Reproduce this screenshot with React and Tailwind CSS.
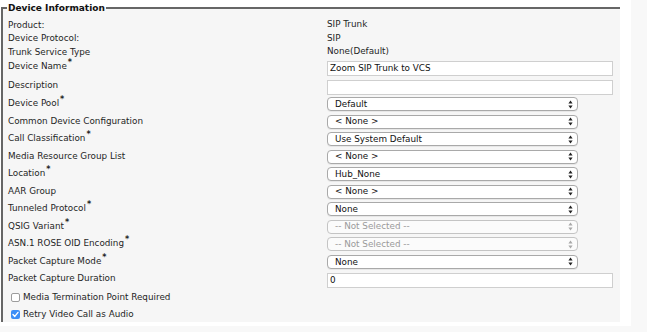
// Device Information panel (trunk configuration form)

function Arrows({ disabled }) {
  const c = disabled ? "#a8a8a8" : "#222";
  return (
    <svg width="5" height="9" viewBox="0 0 5 9">
      <path d="M2.5 0.6 L4.6 3.6 L0.4 3.6 Z" fill={c} />
      <path d="M0.4 5.4 L4.6 5.4 L2.5 8.4 Z" fill={c} />
    </svg>
  );
}

function Select({ value, disabled }) {
  return (
    <div
      className={
        disabled
          ? "mt-[1px] flex h-[14px] w-[251px] items-center justify-between rounded-[4px] border border-[#c4c4c4] bg-[#fbfbfb] pl-[7px] pr-[4px] text-[#9a9a9a]"
          : "mt-[1px] flex h-[14px] w-[251px] items-center justify-between rounded-[4px] border border-[#a9a9a9] bg-white pl-[7px] pr-[4px] text-[#111] shadow-[0_1px_0_rgba(0,0,0,0.06)]"
      }
    >
      <span className="leading-none">{value}</span>
      <Arrows disabled={disabled} />
    </div>
  );
}

function TextInput({ value = "" }) {
  return (
    <div className="flex h-[15px] w-[286px] items-center border border-[#cfcfcf] bg-white pl-[2px] text-[#111]">
      <span className="leading-none">{value}</span>
    </div>
  );
}

function Label({ text, req }) {
  return (
    <span className="leading-[11px]">
      {text}
      {req && <sup className="ml-[1px] text-[8px] font-bold">*</sup>}
    </span>
  );
}

const selects = [
  ["Device Pool", true, "Default"],
  ["Common Device Configuration", false, "< None >"],
  ["Call Classification", true, "Use System Default"],
  ["Media Resource Group List", false, "< None >"],
  ["Location", true, "Hub_None"],
  ["AAR Group", false, "< None >"],
  ["Tunneled Protocol", true, "None"],
  ["QSIG Variant", true, "-- Not Selected --", true],
  ["ASN.1 ROSE OID Encoding", true, "-- Not Selected --", true],
  ["Packet Capture Mode", true, "None"],
];

function CheckBox({ checked }) {
  if (checked)
    return (
      <span className="flex h-[9px] w-[9px] items-center justify-center rounded-[2px] bg-[#3b8df6]">
        <svg width="7" height="7" viewBox="0 0 7 7">
          <path d="M1 3.6 L2.8 5.4 L6 1.4" fill="none" stroke="white" strokeWidth="1.4" strokeLinecap="round" strokeLinejoin="round" />
        </svg>
      </span>
    );
  return <span className="h-[9px] w-[9px] rounded-[2px] border border-[#9c9c9c] bg-white" />;
}

export default function App() {
  return (
    <div className="h-[332px] w-[647px] bg-[#f8f8f8] font-['DejaVu_Sans',Verdana,sans-serif] text-[8.8px] text-[#1f1f1f]">
      <div className="h-[326px] w-[631px] bg-white pl-[1px]">
        <fieldset className="h-[322px] w-[619px] border-l-2 border-t-2 border-[#666] bg-[#f6f6f6]">
          <legend className="ml-[4px] px-[1px] text-[9px] font-bold leading-[16px] text-[#111]">
            Device Information
          </legend>

          <div className="grid grid-cols-[319px_1fr] pl-[5px] pt-[2px]">
            <div className="flex h-[14px] items-center"><Label text="Product:" /></div>
            <div className="flex h-[14px] items-center">SIP Trunk</div>
            <div className="flex h-[13px] items-center"><Label text="Device Protocol:" /></div>
            <div className="flex h-[13px] items-center">SIP</div>
            <div className="flex h-[14px] items-center"><Label text="Trunk Service Type" /></div>
            <div className="flex h-[14px] items-center">None(Default)</div>

            <div className="flex h-[19px] items-start pt-[2px]"><Label text="Device Name" req /></div>
            <div className="flex h-[19px] items-center"><TextInput value="Zoom SIP Trunk to VCS" /></div>
            <div className="flex h-[18px] items-start pt-[2px]"><Label text="Description" /></div>
            <div className="flex h-[18px] items-center"><TextInput /></div>

            {selects.map(([label, req, value, disabled]) => (
              <div key={label} className="contents">
                <div className="flex h-[17.55px] items-start pt-[2px]"><Label text={label} req={req} /></div>
                <div className="flex h-[17.55px] items-start"><Select value={value} disabled={disabled} /></div>
              </div>
            ))}

            <div className="flex h-[17.5px] items-start pt-[2px]"><Label text="Packet Capture Duration" /></div>
            <div className="flex h-[17.5px] items-center"><TextInput value="0" /></div>
          </div>

          <div className="flex h-[17px] items-center gap-[3px] pl-[8px]">
            <CheckBox />
            <span>Media Termination Point Required</span>
          </div>
          <div className="flex h-[17px] items-center gap-[3px] pl-[8px]">
            <CheckBox checked />
            <span>Retry Video Call as Audio</span>
          </div>
        </fieldset>
      </div>
    </div>
  );
}
